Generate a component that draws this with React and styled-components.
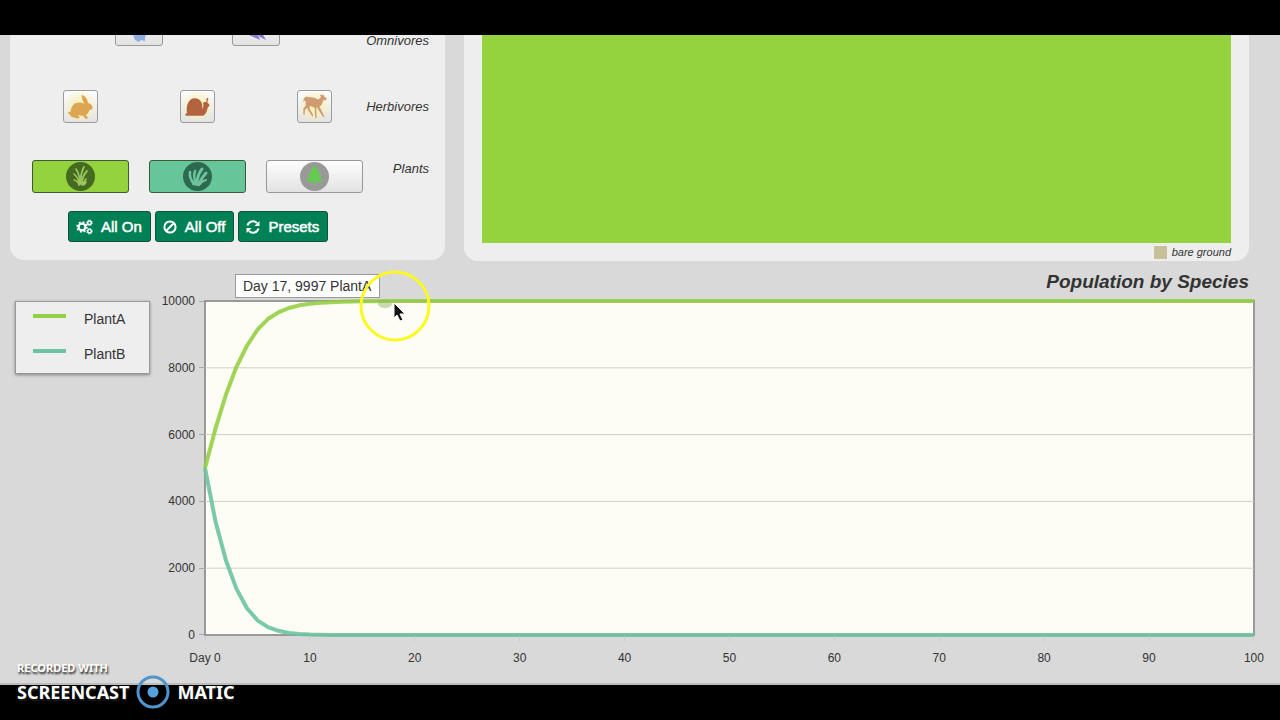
import React from "react";
import styled, { createGlobalStyle } from "styled-components";

const GlobalStyle = createGlobalStyle`
  * {
    box-sizing: border-box;
  }
  body {
    margin: 0;
    background: #000;
    color: #333;
    font-family: "Liberation Sans", Arial, sans-serif;
  }
`;

const Page = styled.div`
  display: flex;
  flex-direction: column;
  min-height: 100vh;
  position: relative;
`;

const BlackBar = styled.div`
  height: 35px;
  background: #000;
`;

const Content = styled.main`
  flex: 1;
  background: #d9d9d9;
  border-bottom: 2px solid #bdbdbd;
`;

const TopRow = styled.div`
  display: flex;
  align-items: flex-start;
  gap: 19px;
  padding: 0 31px 0 10px;
`;

const SpeciesPanel = styled.section`
  flex: 0 0 435px;
  overflow: hidden;
  padding: 0 16px 18px 12px;
  background: #eee;
  border-radius: 0 0 14px 14px;
`;

const SpeciesRow = styled.div`
  display: flex;
  justify-content: space-between;
  align-items: ${props => props.$align || "center"};
  margin-top: ${props => props.$top}px;
`;

const Slots = styled.div`
  display: grid;
  grid-template-columns: repeat(${props => props.$count}, 117px);
  justify-items: center;
  width: 351px;
  justify-content: center;
  flex: none;
`;

const RowLabel = styled.span`
  margin-left: -20px;
  padding: 3px 0;
  font-size: 13px;
  font-style: italic;
  line-height: 12px;
`;

const SpeciesButton = styled.button`
  display: flex;
  align-items: center;
  justify-content: center;
  width: ${props => props.$width}px;
  height: 33px;
  padding: 0;
  border: 1px solid ${props => (props.$color ? "#3b5a38" : "#999")};
  border-radius: 3px;
  background: ${props =>
    props.$color || "linear-gradient(#fdfdfd, #f0f0f0 50%, #e2e2e2)"};
`;

const HerbivoreButton = styled(SpeciesButton)`
  border-color: #999ca0;
  background: radial-gradient(circle, rgba(250, 240, 180, 0.9) 20%, rgba(250, 244, 205, 0) 75%),
    linear-gradient(#fdfdfd, #f0f0f0 50%, #e2e2e2);
`;

const OmnivoreButton = styled(SpeciesButton)`
  margin-bottom: 4px;
`;

const Actions = styled.div`
  display: flex;
  gap: 4px;
  margin: 18px 0 0 46px;
`;

const ActionButton = styled.button`
  display: flex;
  align-items: center;
  gap: 8px;
  height: 31px;
  padding: 0 8px 0 7px;
  border: 1px solid #14513a;
  border-radius: 3px;
  background: #008055;
  color: #fff;
  font-family: inherit;
  font-size: 15px;
  line-height: 18px;
  -webkit-text-stroke: 0.5px #fff;
  white-space: nowrap;
`;

const FieldPanel = styled.section`
  flex: 1;
  padding: 0 18px;
  background: #eee;
  border-radius: 0 0 14px 14px;
`;

const Field = styled.div`
  height: 208px;
  background: #95d33e;
`;

const FieldKey = styled.div`
  display: flex;
  justify-content: flex-end;
  align-items: center;
  gap: 5px;
  height: 18px;
  font-size: 11px;
  font-style: italic;
`;

const Swatch = styled.span`
  width: 13px;
  height: 13px;
  background: #c9bf9a;
`;

const Title = styled.h2`
  margin: 10px 31px 0 0;
  font-size: 19px;
  font-style: italic;
  line-height: 22px;
  text-align: right;
`;

const ChartRow = styled.section`
  display: grid;
  grid-template-columns: 135px 55px 1fr;
  margin: 8px 26px 0 15px;
`;

const Legend = styled.ul`
  display: flex;
  flex-direction: column;
  gap: 1px;
  align-self: start;
  margin: 0;
  padding: 0 17px 2px;
  list-style: none;
  border: 1px solid #999;
  background: #eee;
  box-shadow: 0 1px 3px rgba(0, 0, 0, 0.4);
`;

const LegendItem = styled.li`
  display: flex;
  align-items: center;
  gap: 18px;
  height: 34px;
  font-size: 14px;

  &::before {
    content: "";
    width: 33px;
    height: 4px;
    margin-bottom: 7px;
    background: ${props => props.$color};
  }
`;

const YAxis = styled.div`
  display: flex;
  flex-direction: column;
  justify-content: space-between;
  height: 350px;
  margin-top: -8px;
`;

const YLabel = styled.span`
  display: flex;
  align-items: center;
  justify-content: flex-end;
  gap: 4px;
  font-size: 12px;
  line-height: 16px;

  &::after {
    content: "";
    width: 6px;
    height: 1px;
    background: #aaa;
  }
`;

const PlotColumn = styled.div`
  position: relative;
`;

const Plot = styled.svg`
  display: block;
  width: 100%;
  height: 334px;
  overflow: visible;
`;

const XAxis = styled.div`
  display: flex;
  justify-content: space-between;
  margin: 1px -20px 0;
`;

const XLabel = styled.span`
  display: flex;
  flex-direction: column;
  align-items: center;
  gap: 10px;
  width: 40px;
  font-size: 12px;
  line-height: 14px;
  white-space: nowrap;

  &::before {
    content: "";
    width: 1px;
    height: 5px;
    background: #c8c8c8;
  }
`;

const Tooltip = styled.div`
  position: absolute;
  top: -27px;
  right: calc(83% + 3px);
  padding: 0 8px 0 7px;
  border: 1px solid #999;
  background: #fff;
  font-size: 14px;
  line-height: 22px;
  white-space: nowrap;
`;

const Pointer = styled.svg`
  position: absolute;
  top: -33px;
  left: calc(17% - 26px);
  width: 76px;
  height: 76px;
`;

const Watermark = styled.div`
  position: absolute;
  left: 17px;
  bottom: 10px;
  color: #fff;
  font-family: "Noto Sans", sans-serif;
  font-weight: 700;
  text-shadow: 1px 2px 2px #222;
`;

const WatermarkTop = styled.div`
  font-size: 11px;
  line-height: 12px;
`;

const WatermarkLogo = styled.div`
  display: flex;
  align-items: center;
  gap: 7px;
  font-size: 18px;
  line-height: 36px;
`;

const PLANT_A = "#95cf45";
const PLANT_B = "#6bc3a0";

const series = [
  {
    name: "PlantA",
    color: PLANT_A,
    values: [5000, 6180, 7200, 8030, 8660, 9140, 9460, 9660, 9790, 9870, 9920, 9945, 9960, 9975, 9985, 9990, 9994, 9997]
  },
  {
    name: "PlantB",
    color: PLANT_B,
    values: [5000, 3400, 2230, 1380, 800, 440, 235, 125, 60, 30, 15, 8, 0]
  }
];

const yTicks = [10000, 8000, 6000, 4000, 2000, 0];
const xTicks = ["Day 0", 10, 20, 30, 40, 50, 60, 70, 80, 90, 100];

// one point per day, the last value holds until day 100
const toPoints = values =>
  [...values, values[values.length - 1]]
    .map((v, i) => `${i === values.length ? 100 : i},${100 - v / 100}`)
    .join(" ");

const Rabbit = () => (
  <svg width="25" height="24" viewBox="0 0 75 72" fill="#dba552">
    <path d="M42 0C51 2 59 13 60 24C67 25 75 33 74 39C74 43 68 44 64 46C62 54 58 58 53 60L59 67C60 72 55 73 51 70L45 62L31 61L35 69C28 73 19 67 11 66C8 63 7 60 5 58C0 58 0 52 3 50L8 50C9 34 17 24 30 23C38 22 44 24 50 27C44 18 40 8 42 0Z" />
  </svg>
);

const Snail = () => (
  <svg width="25" height="18" viewBox="0 0 75 54" fill="#b4633f">
    <path d="M0 50L6 44C2 20 13 1 29 1C46 1 55 16 51 33C56 28 56 22 54 16C56 11 61 11 63 13L66 3L69 4L67 14C75 18 75 25 69 27C66 36 65 47 55 53L3 53Z" />
    <circle cx="67" cy="3" r="3" />
  </svg>
);

const Deer = () => (
  <svg width="24" height="25" viewBox="0 0 72 74" fill="#cf9b70">
    <path d="M2 24C0 15 5 7 14 8C26 12 36 8 43 16C50 15 52 11 54 7L49 1L57 3L60 0L63 6L72 14L68 18L60 18C59 28 55 34 49 38L54 46L64 67L61 69L47 48L42 38L40 45L41 72L37 72L35 40C29 40 26 36 22 35L19 43L31 63L28 67L14 46L13 41L6 47L5 62L1 60L1 44L8 35L8 22L5 18Z" />
  </svg>
);

const Bird = () => (
  <svg width="24" height="24" viewBox="0 0 24 24" fill="#8eade0">
    <path d="M9 3Q14 0 16 5L20 7L17 9L20 16L18 19L18 23L14 22L12 24L8 22L6 17Q6 8 9 3Z" />
  </svg>
);

const Lizard = () => (
  <svg width="24" height="20" viewBox="0 0 24 20" fill="#8d7bd0">
    <path d="M3 2L13 7L20 10L18 13L22 20L16 17L14 15L16 20L5 15L10 12Z" />
  </svg>
);

const Grass = () => (
  <svg width="29" height="29" viewBox="0 0 29 29" fill="none" stroke="#9bc75c" strokeLinecap="round">
    <circle cx="14.5" cy="14.5" r="14.5" fill="#456b20" stroke="none" />
    <path d="M13 23Q13 16 8 12" strokeWidth="1.6" />
    <path d="M14 22Q14 13 10 7" strokeWidth="1.6" />
    <path d="M15 22Q14 12 18 5" strokeWidth="1.8" />
    <path d="M16 22Q16 14 21 9" strokeWidth="1.8" />
    <path d="M16 23Q18 20 20 17M18 23L20 20" strokeWidth="1.6" />
    <path d="M13 23Q12 19 8 18" strokeWidth="1.4" />
  </svg>
);

const Leaves = () => (
  <svg width="29" height="29" viewBox="0 0 29 29" fill="none" stroke="#6fc39d" strokeLinecap="round">
    <circle cx="14.5" cy="14.5" r="14.5" fill="#2c6951" stroke="none" />
    <path d="M7 10Q6 16 11 22" strokeWidth="2.6" />
    <path d="M12 9Q10 15 13 22" strokeWidth="2.4" />
    <path d="M19 7Q14 13 14 22" strokeWidth="3" />
    <path d="M23 11Q19 15 16 22" strokeWidth="3" />
    <path d="M23 18Q19 19 16 23L10 22" strokeWidth="2.2" />
  </svg>
);

const Tree = () => (
  <svg width="29" height="29" viewBox="0 0 29 29">
    <circle cx="14.5" cy="14.5" r="14.5" fill="#999" />
    <path fill="#64ca52" d="M14 4L18 7L18 10L21 13L20 15L23 19L20 20L16 19L16 24L14 24L14 19L8 20L6 19L9 15L8 13L11 10L11 7Z" />
  </svg>
);

const Cogs = () => (
  <svg width="17" height="16" viewBox="0 0 17 16" fill="none" stroke="#fff">
    <circle cx="6" cy="8" r="3.4" strokeWidth="2.2" />
    <circle cx="6" cy="8" r="5" strokeWidth="1.6" strokeDasharray="1.9 2.03" />
    <circle cx="13.5" cy="3.8" r="1.8" strokeWidth="1.4" />
    <circle cx="13.5" cy="3.8" r="2.8" strokeDasharray="1.1 1.1" />
    <circle cx="13.5" cy="12.2" r="1.8" strokeWidth="1.4" />
    <circle cx="13.5" cy="12.2" r="2.8" strokeDasharray="1.1 1.1" />
  </svg>
);

const Ban = () => (
  <svg width="14" height="14" viewBox="0 0 14 14" fill="none" stroke="#fff" strokeWidth="2">
    <circle cx="7" cy="7" r="5.6" />
    <path d="M3 11L11 3" />
  </svg>
);

const Refresh = () => (
  <svg width="14" height="14" viewBox="0 0 14 14" fill="none" stroke="#fff" strokeWidth="2">
    <path d="M1.5 5.5A5.5 5.5 0 0 1 11 3.2M12.5 8.5A5.5 5.5 0 0 1 3 10.8" />
    <path d="M13.5 1V6H8.5ZM0.5 13V8H5.5Z" fill="#fff" stroke="none" />
  </svg>
);

const PopulationChart = () => (
  <ChartRow>
    <Legend>
      {series.map(s => (
        <LegendItem key={s.name} $color={s.color}>
          {s.name}
        </LegendItem>
      ))}
    </Legend>
    <YAxis>
      {yTicks.map(tick => (
        <YLabel key={tick}>{tick}</YLabel>
      ))}
    </YAxis>
    <PlotColumn>
      <Plot viewBox="0 0 100 100" preserveAspectRatio="none">
        <rect width="100" height="100" fill="#fdfdf5" stroke="#999" strokeWidth="2" vectorEffect="non-scaling-stroke" />
        {[20, 40, 60, 80].map(y => (
          <path key={y} d={`M0 ${y}H100`} stroke="#d0d0c8" vectorEffect="non-scaling-stroke" />
        ))}
        {[...series].reverse().map(s => (
          <polyline
            key={s.name}
            points={toPoints(s.values)}
            fill="none"
            stroke={s.color}
            strokeWidth="4"
            strokeOpacity="0.9"
            strokeLinejoin="round"
            vectorEffect="non-scaling-stroke"
          />
        ))}
      </Plot>
      <XAxis>
        {xTicks.map(tick => (
          <XLabel key={tick}>{tick}</XLabel>
        ))}
      </XAxis>
      <Tooltip>Day 17, 9997 PlantA</Tooltip>
      <Pointer viewBox="0 0 76 76">
        <ellipse cx="28" cy="36" rx="7" ry="4" fill="#95b56c" opacity="0.5" />
        <circle cx="38" cy="38" r="34" fill="none" stroke="#fbf920" strokeWidth="3" />
        <path d="M37 35V50L40 47L43 53L46 52L43 46H48Z" fill="#111" stroke="#fff" strokeWidth="1" />
      </Pointer>
    </PlotColumn>
  </ChartRow>
);

export default function App() {
  return (
    <Page>
      <GlobalStyle />
      <BlackBar />
      <Content>
        <TopRow>
          <SpeciesPanel>
            <SpeciesRow $top={-22} $align="flex-end">
              <Slots $count={2}>
                <OmnivoreButton $width={48} aria-label="Omnivore A"><Bird /></OmnivoreButton>
                <OmnivoreButton $width={48} aria-label="Omnivore B"><Lizard /></OmnivoreButton>
              </Slots>
              <RowLabel>Omnivores</RowLabel>
            </SpeciesRow>
            <SpeciesRow $top={40}>
              <Slots $count={3}>
                <HerbivoreButton $width={35} aria-label="Rabbit"><Rabbit /></HerbivoreButton>
                <HerbivoreButton $width={35} aria-label="Snail"><Snail /></HerbivoreButton>
                <HerbivoreButton $width={35} aria-label="Deer"><Deer /></HerbivoreButton>
              </Slots>
              <RowLabel>Herbivores</RowLabel>
            </SpeciesRow>
            <SpeciesRow $top={37} $align="flex-start">
              <Slots $count={3}>
                <SpeciesButton $width={97} $color="#95d33e" aria-label="Plant A"><Grass /></SpeciesButton>
                <SpeciesButton $width={97} $color="#66c699" aria-label="Plant B"><Leaves /></SpeciesButton>
                <SpeciesButton $width={97} aria-label="Plant C"><Tree /></SpeciesButton>
              </Slots>
              <RowLabel>Plants</RowLabel>
            </SpeciesRow>
            <Actions>
              <ActionButton><Cogs />All On</ActionButton>
              <ActionButton><Ban />All Off</ActionButton>
              <ActionButton><Refresh />Presets</ActionButton>
            </Actions>
          </SpeciesPanel>
          <FieldPanel>
            <Field />
            <FieldKey>
              <Swatch />
              bare ground
            </FieldKey>
          </FieldPanel>
        </TopRow>
        <Title>Population by Species</Title>
        <PopulationChart />
      </Content>
      <BlackBar />
      <Watermark>
        <WatermarkTop>RECORDED WITH</WatermarkTop>
        <WatermarkLogo>
          SCREENCAST
          <svg width="34" height="34" viewBox="0 0 34 34">
            <circle cx="17" cy="17" r="15" fill="none" stroke="#4f94cd" strokeWidth="3" />
            <circle cx="17" cy="17" r="5.5" fill="#55a0dc" />
          </svg>
          MATIC
        </WatermarkLogo>
      </Watermark>
    </Page>
  );
}
